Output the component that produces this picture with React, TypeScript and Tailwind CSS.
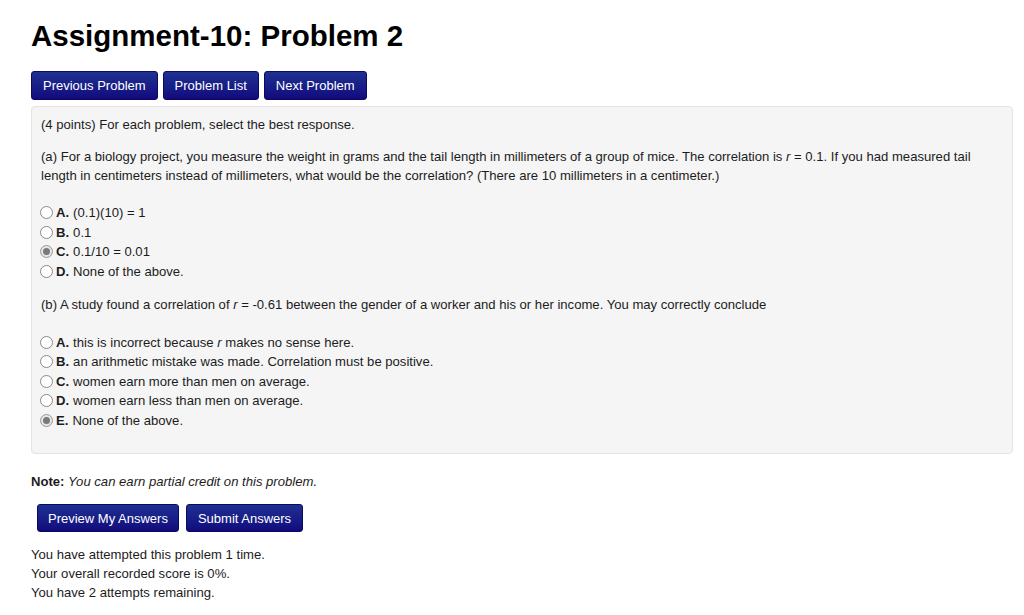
import React from 'react'

const font = { fontFamily: '"Liberation Sans", Arial, sans-serif' }

const btn =
  'rounded-[3px] border border-[#0a0a5e] bg-gradient-to-b from-[#1f2f91] to-[#13087e] text-[13px] text-white'

function NavButton({ children }: { children: React.ReactNode }) {
  return <button className={'h-[29px] px-[11px] ' + btn}>{children}</button>
}

function Radio({ checked }: { checked?: boolean }) {
  return (
    <span
      className={
        '-ml-[1px] mr-[3px] inline-flex h-[13px] w-[13px] shrink-0 items-center justify-center rounded-full border ' +
        (checked ? 'border-[#9a9a9a] bg-[#e6e6e6]' : 'border-[#8a8a8a] bg-white')
      }
    >
      {checked && <span className="h-[7px] w-[7px] rounded-full bg-[#7a7a7a]" />}
    </span>
  )
}

function Choice({ letter, checked, children }: any) {
  return (
    <label className="flex h-[19.6px] items-center">
      <Radio checked={checked} />
      <b>{letter}.</b>
      <span className="ml-[4px]">{children}</span>
    </label>
  )
}

export default function App() {
  return (
    <div style={font} className="min-h-[615px] bg-white pl-[31px] pr-[11px] pt-[17px] text-[13.1px] text-[#1c1c1c]">
      <h1 className="text-[29.5px] font-bold leading-[37px] text-black">Assignment-10: Problem 2</h1>

      <div className="mt-[17px] flex gap-[5px]">
        <NavButton>Previous Problem</NavButton>
        <NavButton>Problem List</NavButton>
        <NavButton>Next Problem</NavButton>
      </div>

      <div className="mt-[6px] rounded-[4px] border border-[#e3e3e3] bg-[#f5f5f5] px-[9px] pb-[23px] pt-[8px] leading-[19px]">
        <p>(4 points) For each problem, select the best response.</p>

        <p className="mt-[13px]">
          (a) For a biology project, you measure the weight in grams and the tail length in millimeters of a group of
          mice. The correlation is <i>r</i> = 0.1. If you had measured tail length in centimeters instead of millimeters,
          what would be the correlation? (There are 10 millimeters in a centimeter.)
        </p>

        <div className="mt-[18px]">
          <Choice letter="A">(0.1)(10) = 1</Choice>
          <Choice letter="B">0.1</Choice>
          <Choice letter="C" checked>0.1/10 = 0.01</Choice>
          <Choice letter="D">None of the above.</Choice>
        </div>

        <p className="mt-[14px]">
          (b) A study found a correlation of <i>r</i> = -0.61 between the gender of a worker and his or her income. You
          may correctly conclude
        </p>

        <div className="mt-[18px]">
          <Choice letter="A">
            this is incorrect because <i>r</i> makes no sense here.
          </Choice>
          <Choice letter="B">an arithmetic mistake was made. Correlation must be positive.</Choice>
          <Choice letter="C">women earn more than men on average.</Choice>
          <Choice letter="D">women earn less than men on average.</Choice>
          <Choice letter="E" checked>None of the above.</Choice>
        </div>
      </div>

      <p className="mt-[18px] leading-[19px]">
        <b>Note:</b> <i>You can earn partial credit on this problem.</i>
      </p>

      <div className="ml-[6px] mt-[13px] flex gap-[7px]">
        <button className={'h-[28px] px-[10px] ' + btn}>Preview My Answers</button>
        <button className={'h-[28px] px-[11px] ' + btn}>Submit Answers</button>
      </div>

      <div className="mt-[13px] leading-[19px]">
        <p>You have attempted this problem 1 time.</p>
        <p>Your overall recorded score is 0%.</p>
        <p>You have 2 attempts remaining.</p>
      </div>
    </div>
  )
}
